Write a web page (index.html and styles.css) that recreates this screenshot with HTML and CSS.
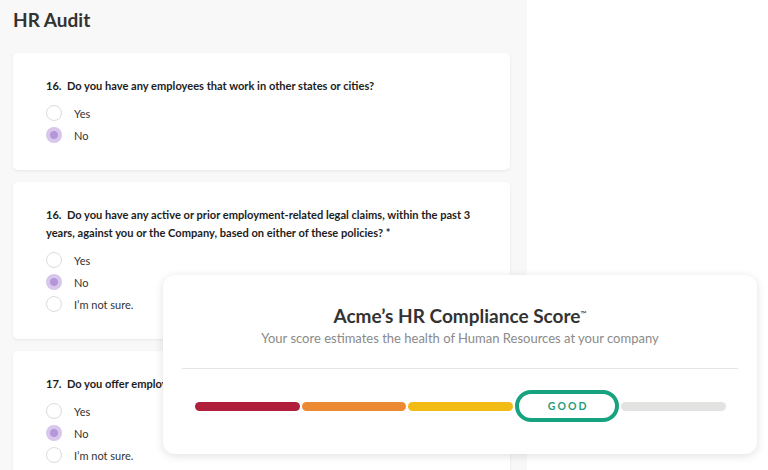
FILE: index.html
```html
<!DOCTYPE html>
<html lang="en">
<head>
<meta charset="utf-8">
<title>HR Audit</title>
<link rel="stylesheet" href="styles.css">
</head>
<body>
<div class="page">
  <main class="audit">
    <h1 class="audit-title">HR Audit</h1>
    <section class="card">
      <p class="question">16.&nbsp; Do you have any employees that work in other states or cities?</p>
      <ul class="options">
        <li class="option"><span class="radio"></span>Yes</li>
        <li class="option"><span class="radio checked"></span>No</li>
      </ul>
    </section>
    <section class="card">
      <p class="question">16.&nbsp; Do you have any active or prior employment-related legal claims, within the past 3 years, against you or the Company, based on either of these policies? *</p>
      <ul class="options">
        <li class="option"><span class="radio"></span>Yes</li>
        <li class="option"><span class="radio checked"></span>No</li>
        <li class="option"><span class="radio"></span>I’m not sure.</li>
      </ul>
    </section>
    <section class="card">
      <p class="question">17.&nbsp; Do you offer employees any benefits such as health insurance or retirement plans?</p>
      <ul class="options">
        <li class="option"><span class="radio"></span>Yes</li>
        <li class="option"><span class="radio checked"></span>No</li>
        <li class="option"><span class="radio"></span>I’m not sure.</li>
      </ul>
    </section>
  </main>
  <aside class="side"></aside>
</div>

<div class="score-card">
  <h2 class="score-title">Acme’s HR Compliance Score<sup class="tm">™</sup></h2>
  <p class="score-sub">Your score estimates the health of Human Resources at your company</p>
  <hr class="score-divider">
  <div class="meter">
    <span class="seg seg-red"></span>
    <span class="seg seg-orange"></span>
    <span class="seg seg-yellow"></span>
    <span class="seg-pill">GOOD</span>
    <span class="seg seg-gray"></span>
  </div>
</div>
</body>
</html>
```

FILE: styles.css
```css
* { box-sizing: border-box; }
html, body { margin: 0; padding: 0; }
body {
  width: 768px;
  height: 470px;
  overflow: hidden;
  font-family: "Lato", "Liberation Sans", sans-serif;
  color: #222;
  background: #fff;
  position: relative;
}
.page {
  display: flex;
  height: 470px;
}
.audit {
  width: 527px;
  background: #f8f8f8;
  padding: 0 17px 0 13px;
}
.side { flex: 1; background: #fff; }
.audit-title {
  margin: 0;
  padding-top: 8px;
  height: 53px;
  font-size: 19px;
  font-weight: 700;
  color: #333;
}
.card {
  background: #fff;
  border-radius: 5px;
  box-shadow: 0 1px 3px rgba(0,0,0,0.07);
  padding: 24px 33px 27px 33px;
  margin-bottom: 12px;
}
.question {
  margin: 0 0 10px;
  font-size: 11.1px;
  font-weight: 700;
  line-height: 18px;
  color: #1d1d1d;
}
.options {
  list-style: none;
  margin: 0;
  padding: 0;
  display: flex;
  flex-direction: column;
  gap: 6px;
}
.option {
  display: flex;
  align-items: center;
  gap: 12px;
  height: 16px;
  font-size: 11px;
  color: #333;
}
.radio {
  width: 16px;
  height: 16px;
  border-radius: 50%;
  border: 1px solid #dcdcdc;
  background: #fff;
  flex: none;
}
.radio.checked {
  border: none;
  background: radial-gradient(circle, #b596d9 0 3.5px, #d8c6ec 4.5px);
}
.score-card {
  position: absolute;
  left: 163px;
  top: 275px;
  width: 594px;
  height: 179px;
  background: #fff;
  border-radius: 12px;
  box-shadow: 0 2px 10px rgba(0,0,0,0.12);
  padding: 29px 19px 0;
  text-align: center;
}
.score-title {
  margin: 0;
  font-size: 19px;
  font-weight: 700;
  color: #333;
  line-height: 24px;
}
.tm {
  font-size: 8px;
  vertical-align: top;
  position: relative;
  top: -2px;
  font-weight: 400;
}
.score-sub {
  margin: 0;
  font-size: 13px;
  color: #8a8a8a;
  line-height: 20px;
}
.score-divider {
  border: 0;
  border-top: 1px solid #e4e4e4;
  margin: 20px 0 0;
}
.meter {
  display: grid;
  grid-template-columns: repeat(5, minmax(0, 1fr));
  align-items: center;
  gap: 2px;
  margin: 21px 12px 0 13px;
}
.seg {
  height: 9px;
  border-radius: 5px;
}
.seg-red { background: #b01f3c; }
.seg-orange { background: #ec8a34; }
.seg-yellow { background: #f3bc14; }
.seg-gray { background: #e3e3e1; }
.seg-pill {
  height: 32px;
  border: 4px solid #17a37f;
  border-radius: 16px;
  background: #fff;
  color: #1f9c7c;
  font-size: 10.5px;
  font-weight: 700;
  letter-spacing: 2px;
  display: flex;
  align-items: center;
  justify-content: center;
  padding-left: 2px;
}
```
